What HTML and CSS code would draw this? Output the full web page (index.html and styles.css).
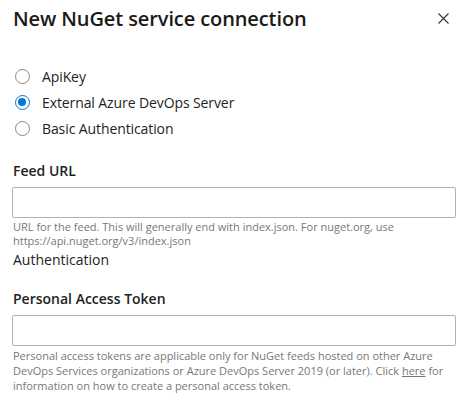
FILE: index.html
```html
<!DOCTYPE html>
<html lang="en">
<head>
<meta charset="utf-8">
<title>New NuGet service connection</title>
<link rel="stylesheet" href="styles.css">
</head>
<body>
<div class="panel">
  <div class="header">
    <h1 class="title">New NuGet service connection</h1>
    <button class="close" aria-label="Close">
      <svg width="11" height="11" viewBox="0 0 11 11"><path d="M0.5 0.5L10.5 10.5M10.5 0.5L0.5 10.5" stroke="#333" stroke-width="1.1" fill="none"/></svg>
    </button>
  </div>
  <div class="radios">
    <label class="radio"><span class="dot"></span><span>ApiKey</span></label>
    <label class="radio"><span class="dot checked"></span><span>External Azure DevOps Server</span></label>
    <label class="radio"><span class="dot"></span><span>Basic Authentication</span></label>
  </div>
  <div class="field first">
    <div class="label">Feed URL</div>
    <div class="input"></div>
    <div class="help">URL for the feed. This will generally end with index.json. For nuget.org, use https://api.nuget.org/v3/index.json</div>
  </div>
  <div class="section">Authentication</div>
  <div class="field">
    <div class="label">Personal Access Token</div>
    <div class="input"></div>
    <div class="help help2">Personal access tokens are applicable only for NuGet feeds hosted on other Azure DevOps Services organizations or Azure DevOps Server 2019 (or later). Click <a href="#">here</a> for information on how to create a personal access token.</div>
  </div>
</div>
</body>
</html>
```
FILE: styles.css
```css
html, body {
  margin: 0;
  padding: 0;
  background: #fff;
}
body {
  font-family: "Open Sans", "Noto Sans", sans-serif;
  color: #201f1e;
}
.panel {
  display: flex;
  flex-direction: column;
  padding: 0 18px 0 13px;
}
.header {
  display: flex;
  align-items: center;
  justify-content: space-between;
  height: 36px;
  margin-top: 0;
}
.title {
  margin: 0;
  font-size: 20px;
  font-weight: 600;
  letter-spacing: -0.1px;
  color: #1b1a19;
}
.close {
  border: 0;
  background: none;
  padding: 0;
  width: 24px;
  height: 24px;
  display: flex;
  align-items: center;
  justify-content: center;
  margin-right: 1px;
}
.radios {
  display: flex;
  flex-direction: column;
  margin-top: 27px;
}
.radio {
  display: flex;
  align-items: center;
  gap: 12px;
  height: 26px;
  font-size: 14px;
  letter-spacing: -0.1px;
  padding-left: 2px;
}
.dot {
  width: 15px;
  height: 15px;
  border: 1px solid #8a8886;
  border-radius: 50%;
  box-sizing: border-box;
  flex: none;
  position: relative;
}
.dot.checked {
  border: 1.5px solid #0078d4;
}
.dot.checked::after {
  content: "";
  position: absolute;
  left: 2px;
  top: 2px;
  width: 8px;
  height: 8px;
  border-radius: 50%;
  background: #0078d4;
}
.field {
  display: flex;
  flex-direction: column;
}
.field.first {
  margin-top: 17px;
}
.label {
  font-size: 14px;
  font-weight: 600;
  height: 26px;
  line-height: 26px;
  margin-bottom: 3px;
}
.input {
  height: 31px;
  border: 1px solid #b3b0ad;
  border-radius: 2px;
  box-sizing: border-box;
  margin-left: -1px;
}
.help {
  font-size: 11px;
  line-height: 14px;
  color: #797775;
  margin-top: 2px;
}
.help2 {
  line-height: 15px;
}
.help a {
  color: #797775;
}
.section {
  font-size: 14px;
  line-height: 20px;
  margin-top: 2px;
  margin-bottom: 16px;
}
```
